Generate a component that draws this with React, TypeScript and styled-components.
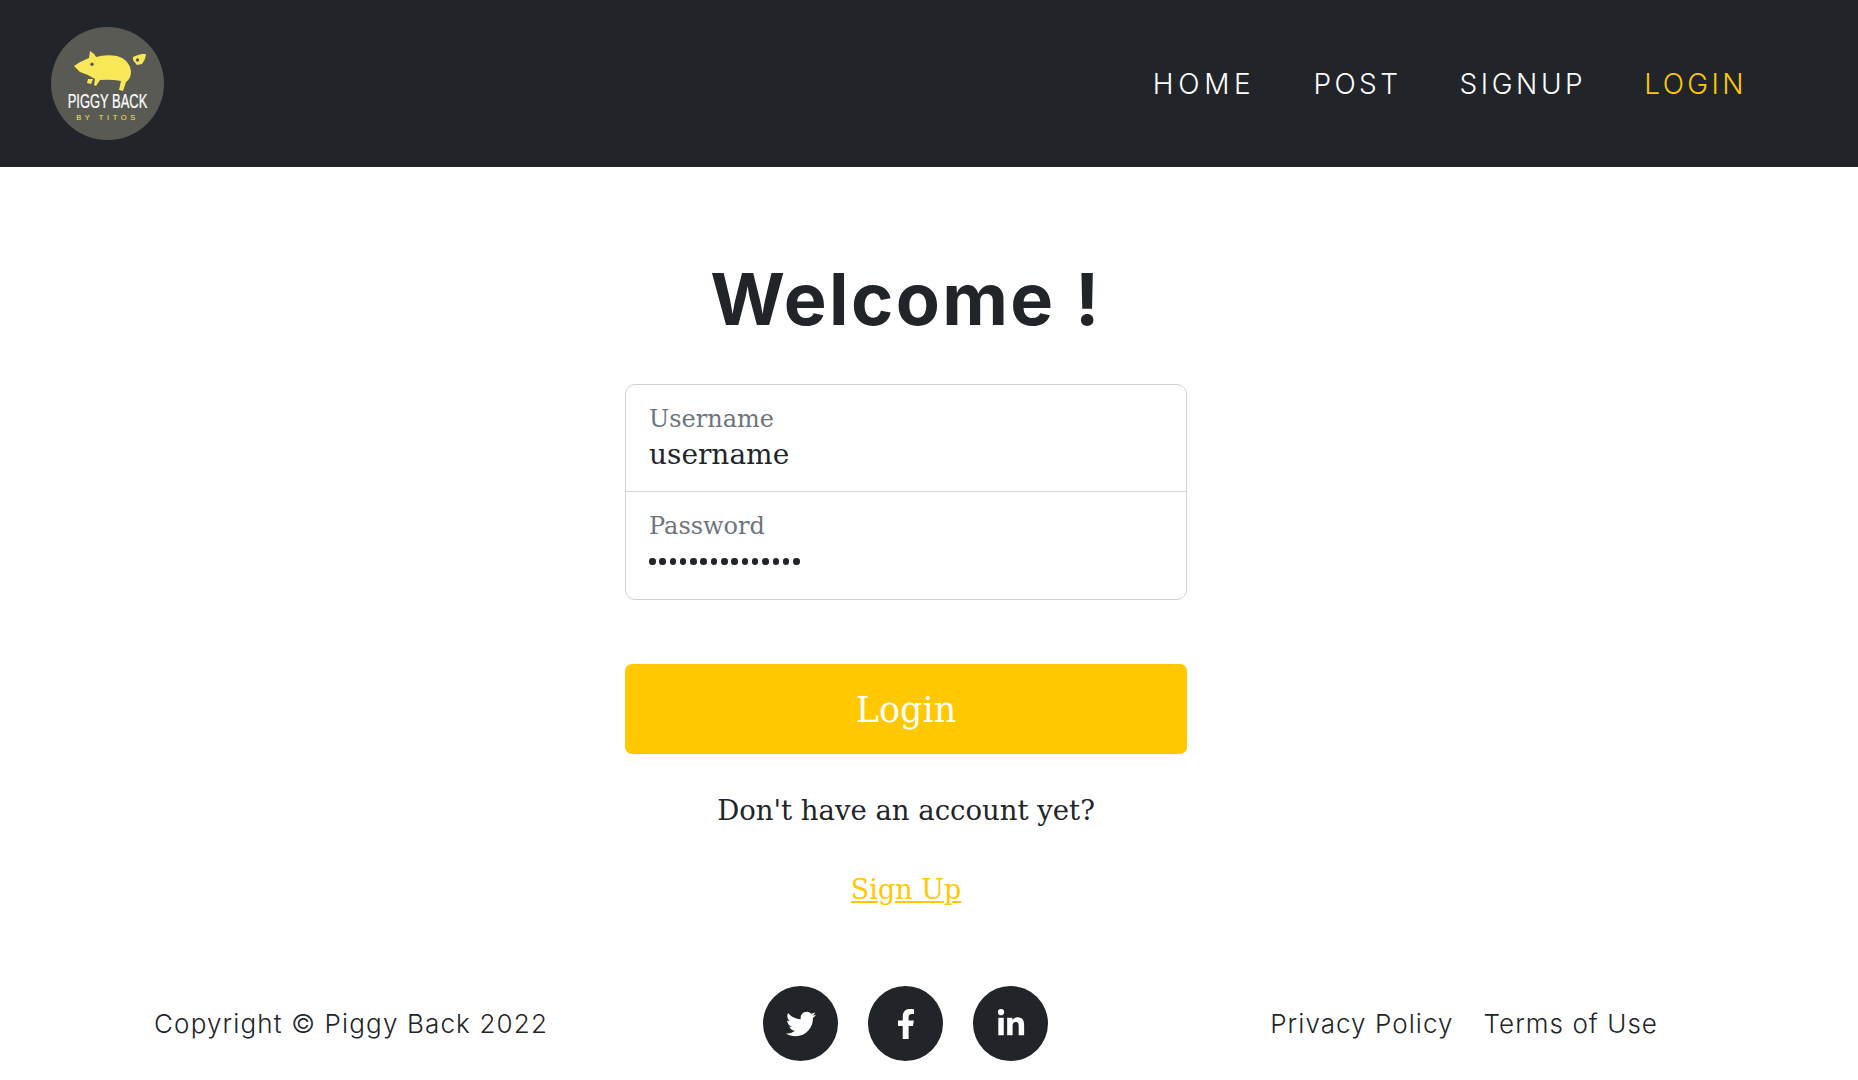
import React from "react";
import styled, { createGlobalStyle } from "styled-components";
import { FaTwitter, FaFacebookF, FaLinkedinIn } from "react-icons/fa";

const Global = createGlobalStyle`
  html, body { margin: 0; padding: 0; background: #fff; }
  * { box-sizing: border-box; }
`;
const sans = `Inter, "Open Sans", sans-serif`;
const slab = `"DejaVu Serif", "Liberation Serif", serif`;

const Page = styled.div`
  width: 1858px;
  height: 1080px;
  overflow: hidden;
  display: flex;
  flex-direction: column;
`;
const Header = styled.header`
  height: 167px;
  background: #212529;
  display: flex;
  align-items: center;
  justify-content: space-between;
  padding: 0 111px 0 51px;
`;
const Nav = styled.nav`
  display: flex;
  gap: 58px;
`;
const NavLink = styled.a<{ $active?: boolean; $tracking?: number }>`
  font: 300 28px/34px ${sans};
  letter-spacing: ${(p) => p.$tracking ?? 3.4}px;
  color: ${(p) => (p.$active ? "#ffc800" : "#fff")};
`;
const Main = styled.main`
  flex: 1;
  width: 1812px;
  display: flex;
  flex-direction: column;
  align-items: center;
`;
const Title = styled.h1`
  margin: 96px 0 0;
  font: 700 72px/1 ${sans};
  letter-spacing: 2.4px;
  color: #212529;
`;
const Form = styled.form`
  width: 562px;
  margin-top: 49px;
  display: flex;
  flex-direction: column;
`;
const Fields = styled.div`
  height: 216px;
  border: 1px solid #ced4da;
  border-radius: 10px;
  display: flex;
  flex-direction: column;
`;
const Field = styled.div<{ $first?: boolean }>`
  flex: ${(p) => (p.$first ? "0 0 107px" : "1")};
  padding: 19px 23px 0;
  border-bottom: ${(p) => (p.$first ? "1px solid #ced4da" : "none")};
`;
const FieldLabel = styled.div`
  font: 400 24px/30px ${slab};
  color: #6c757d;
`;
const FieldValue = styled.div`
  margin-top: 3px;
  font: 400 28px/36px ${slab};
  color: #212529;
`;
const Dots = styled.div`
  margin-top: 17px;
  display: flex;
  gap: 3.8px;
`;
const Dot = styled.span`
  width: 6.5px;
  height: 6.5px;
  border-radius: 50%;
  background: #212529;
`;
const LoginButton = styled.button`
  height: 90px;
  margin-top: 64px;
  padding: 2px 0 0;
  border: none;
  border-radius: 7px;
  background: #ffc800;
  color: #fff;
  font: 400 35px ${slab};
`;
const Prompt = styled.p`
  margin: 38px 0 0;
  text-align: center;
  font: 400 27.5px/36px ${slab};
  color: #212529;
`;
const SignUp = styled.a`
  margin-top: 44px;
  text-align: center;
  font: 400 27px/36px ${slab};
  color: #ffc800;
  text-decoration: underline;
`;
const Footer = styled.footer`
  margin-top: auto;
  height: 132px;
  padding: 38px 154px 19px;
  display: grid;
  grid-template-columns: 1fr auto 1fr;
  align-items: center;
  width: 100%;
  font: 300 26px ${sans};
  letter-spacing: 1.15px;
  color: #212529;
`;
const Socials = styled.div`
  display: flex;
  gap: 30px;
  margin-left: -1px;
`;
const Social = styled.a`
  width: 75px;
  height: 75px;
  border-radius: 50%;
  background: #212529;
  color: #fff;
  display: flex;
  align-items: center;
  justify-content: center;
  font-size: 30px;
`;
const Legal = styled.div`
  display: flex;
  justify-content: flex-end;
  gap: 30px;
  letter-spacing: 1.05px;
`;

const Logo = () => (
  <svg width="113" height="113" viewBox="0 0 113 113">
    <circle cx="56.5" cy="56.5" r="56.5" fill="#5a5a55" />
    <path
      d="M23 39 Q30 34 38 31 L39 24 Q43 26 45 30 Q55 27 66 29 Q78 32 80 44 Q80 52 75 55 L72 64 L68 63 L70 54 Q60 52 49 53 L45 59 L43 58 L44 52 Q36 47 29 45 Z"
      fill="#f8e858"
    />
    <path
      d="M37 52 L42 52 L40 57 L36 56 Z M82 30 L87 28 L91 27 L95 27 L94 32 L91 37 L86 38 L82 33 Z"
      fill="#f8e858"
    />
    <circle cx="41" cy="37.3" r="1.7" fill="#5a5a55" />
    <circle cx="86.5" cy="33" r="1.7" fill="#5a5a55" />
    <g transform="translate(56.5 81) scale(0.72 1.17)">
      <text
        textAnchor="middle"
        fontFamily="Liberation Sans, sans-serif"
        fontSize="18"
        fill="#fff"
        stroke="#fff"
        strokeWidth="0.2"
      >
        PIGGY BACK
      </text>
    </g>
    <text
      x="56.5"
      y="93"
      textAnchor="middle"
      fontFamily="Liberation Sans, sans-serif"
      fontSize="7.5"
      letterSpacing="3.6"
      fill="#f8e858"
    >
      BY TITOS
    </text>
  </svg>
);

export default function App() {
  return (
    <Page>
      <Global />
      <Header>
        <Logo />
        <Nav>
          <NavLink $tracking={4.7}>HOME</NavLink>
          <NavLink>POST</NavLink>
          <NavLink $tracking={3.6}>SIGNUP</NavLink>
          <NavLink $active>LOGIN</NavLink>
        </Nav>
      </Header>
      <Main>
        <Title>Welcome !</Title>
        <Form>
          <Fields>
            <Field $first>
              <FieldLabel>Username</FieldLabel>
              <FieldValue>username</FieldValue>
            </Field>
            <Field>
              <FieldLabel>Password</FieldLabel>
              <Dots>
                {Array.from({ length: 15 }).map((_, i) => (
                  <Dot key={i} />
                ))}
              </Dots>
            </Field>
          </Fields>
          <LoginButton type="button">Login</LoginButton>
          <Prompt>Don't have an account yet?</Prompt>
          <SignUp>Sign Up</SignUp>
        </Form>
        <Footer>
          <span>Copyright © Piggy Back 2022</span>
          <Socials>
            <Social><FaTwitter /></Social>
            <Social><FaFacebookF /></Social>
            <Social><FaLinkedinIn /></Social>
          </Socials>
          <Legal>
            <span>Privacy Policy</span>
            <span>Terms of Use</span>
          </Legal>
        </Footer>
      </Main>
    </Page>
  );
}
